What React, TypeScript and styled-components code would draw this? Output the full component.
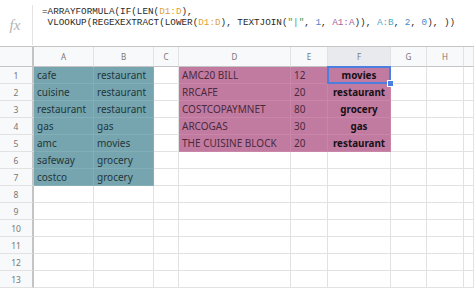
import React from 'react';
import styled, { createGlobalStyle, css } from 'styled-components';

const TEAL = '#76a5af';
const PINK = '#c27ba0';
const GRID = '#e2e2e2';

const COLUMNS = ['A', 'B', 'C', 'D', 'E', 'F', 'G', 'H', ''];

type Fill = 'teal' | 'pink' | undefined;

interface CellData {
  text?: string;
  fill?: Fill;
  bold?: boolean;
  center?: boolean;
  selected?: boolean;
}

const lookup = [
  ['cafe', 'restaurant'],
  ['cuisine', 'restaurant'],
  ['restaurant', 'restaurant'],
  ['gas', 'gas'],
  ['amc', 'movies'],
  ['safeway', 'grocery'],
  ['costco', 'grocery'],
];

const purchases = [
  ['AMC20 BILL', '12', 'movies'],
  ['RRCAFE', '20', 'restaurant'],
  ['COSTCOPAYMNET', '80', 'grocery'],
  ['ARCOGAS', '30', 'gas'],
  ['THE CUISINE BLOCK', '20', 'restaurant'],
];

const buildRow = (i: number): CellData[] => {
  const left = lookup[i];
  const right = purchases[i];
  return [
    { text: left?.[0], fill: left ? 'teal' : undefined },
    { text: left?.[1], fill: left ? 'teal' : undefined },
    {},
    { text: right?.[0], fill: right ? 'pink' : undefined },
    { text: right?.[1], fill: right ? 'pink' : undefined },
    { text: right?.[2], fill: right ? 'pink' : undefined, bold: true, center: true, selected: i === 0 },
    {},
    {},
    {},
  ];
};

const GlobalStyle = createGlobalStyle`
  html, body {
    margin: 0;
    padding: 0;
    background: #fff;
    overflow: hidden;
  }
  body {
    font-family: 'Noto Sans', 'Open Sans', sans-serif;
  }
`;

const Page = styled.div`
  width: 474px;
  height: 289px;
  display: flex;
  flex-direction: column;
  overflow: hidden;
`;

const FormulaBar = styled.div`
  height: 46px;
  display: flex;
  border-bottom: 1px solid #c6c6c6;
  box-sizing: content-box;
`;

const FxBox = styled.div`
  width: 33px;
  margin: 5px 0 1px;
  border-right: 1px solid #e3e3e3;
  display: flex;
  align-items: center;
  justify-content: center;
  padding-right: 2px;
  box-sizing: border-box;
  font-family: 'Liberation Serif', serif;
  font-style: italic;
  font-size: 15px;
  color: #b3b3b3;
`;

const Formula = styled.div`
  padding: 7px 0 0 9px;
  display: flex;
  flex-direction: column;
  font-family: 'Liberation Mono', monospace;
  font-size: 9.3px;
  color: #2a2a2a;
`;

const FormulaLine = styled.div<{ $indent?: boolean }>`
  height: 10.5px;
  line-height: 10.5px;
  white-space: pre;
  padding-left: ${({ $indent }) => ($indent ? '5.6px' : '0')};
`;

const Ref = styled.span<{ $tone: 'orange' | 'green' | 'blue' | 'purple' | 'cyan' }>`
  color: ${({ $tone }) =>
    ({ orange: '#e0a23a', green: '#3f9c58', blue: '#4c87c4', purple: '#a8629f', cyan: '#4fa7c9' })[$tone]};
`;

const Sheet = styled.div`
  display: grid;
  grid-template-columns: 34px 60px 60px 25px 112px 37px 63px 36px 37px 1fr;
  grid-auto-rows: 17px;
  grid-template-rows: 20px;
`;

const Corner = styled.div`
  background: #f8f9fa;
  border-right: 2px solid #c4c4c4;
  border-bottom: 1px solid #c4c4c4;
  box-sizing: border-box;
`;

const ColHeader = styled.div<{ $active?: boolean }>`
  background: ${({ $active }) => ($active ? '#e8eaed' : '#f8f9fa')};
  border-right: 1px solid ${GRID};
  border-bottom: 1px solid #c4c4c4;
  box-sizing: border-box;
  display: flex;
  align-items: center;
  justify-content: center;
  font-size: 8px;
  color: #777;
`;

const RowHeader = styled.div`
  background: #f8f9fa;
  border-right: 2px solid #c4c4c4;
  border-bottom: 1px solid ${GRID};
  box-sizing: border-box;
  display: flex;
  align-items: center;
  justify-content: center;
  font-size: 8.5px;
  color: #777;
`;

const Cell = styled.div<{ $fill?: Fill; $bold?: boolean; $center?: boolean; $selected?: boolean }>`
  position: relative;
  box-sizing: border-box;
  border-right: 1px solid ${GRID};
  border-bottom: 1px solid ${GRID};
  padding: 0 3px;
  display: flex;
  align-items: center;
  justify-content: ${({ $center }) => ($center ? 'center' : 'flex-start')};
  font-size: 10px;
  white-space: nowrap;
  overflow: visible;
  color: #222;
  ${({ $fill }) =>
    $fill === 'teal' &&
    css`
      background: ${TEAL};
      border-color: #82aeb7;
      color: #23373b;
    `}
  ${({ $fill }) =>
    $fill === 'pink' &&
    css`
      background: ${PINK};
      border-color: #c986a9;
      color: #4a2a3d;
    `}
  ${({ $bold }) =>
    $bold &&
    css`
      font-weight: 700;
      font-size: 9.8px;
      color: #161016;
    `}
  ${({ $selected }) =>
    $selected &&
    css`
      &::before {
        content: '';
        position: absolute;
        left: -1px;
        top: -1px;
        right: -1px;
        bottom: -1px;
        border: 2px solid #4a7fe0;
      }
      &::after {
        content: '';
        position: absolute;
        right: -4px;
        bottom: -4px;
        width: 5px;
        height: 5px;
        background: #4a7fe0;
        border: 1px solid #fff;
        z-index: 2;
      }
    `}
`;

const App = () => {
  const rows = Array.from({ length: 13 }, (_, i) => buildRow(i));

  return (
    <>
      <GlobalStyle />
      <Page>
        <FormulaBar>
          <FxBox>fx</FxBox>
          <Formula>
            <FormulaLine>
              =ARRAYFORMULA(IF(LEN(<Ref $tone="orange">D1:D</Ref>),
            </FormulaLine>
            <FormulaLine $indent>
              VLOOKUP(REGEXEXTRACT(LOWER(<Ref $tone="orange">D1:D</Ref>), TEXTJOIN(
              <Ref $tone="green">"|"</Ref>, <Ref $tone="blue">1</Ref>, <Ref $tone="purple">A1:A</Ref>)),{' '}
              <Ref $tone="cyan">A:B</Ref>, <Ref $tone="blue">2</Ref>, <Ref $tone="blue">0</Ref>), ))
            </FormulaLine>
          </Formula>
        </FormulaBar>

        <Sheet>
          <Corner />
          {COLUMNS.map((c, i) => (
            <ColHeader key={i} $active={c === 'F'}>
              {c}
            </ColHeader>
          ))}
          {rows.map((row, r) => (
            <React.Fragment key={r}>
              <RowHeader>{r + 1}</RowHeader>
              {row.map((cell, c) => (
                <Cell
                  key={c}
                  $fill={cell.fill}
                  $bold={cell.bold}
                  $center={cell.center}
                  $selected={cell.selected}>
                  {cell.text}
                </Cell>
              ))}
            </React.Fragment>
          ))}
        </Sheet>
      </Page>
    </>
  );
};

export default App;
